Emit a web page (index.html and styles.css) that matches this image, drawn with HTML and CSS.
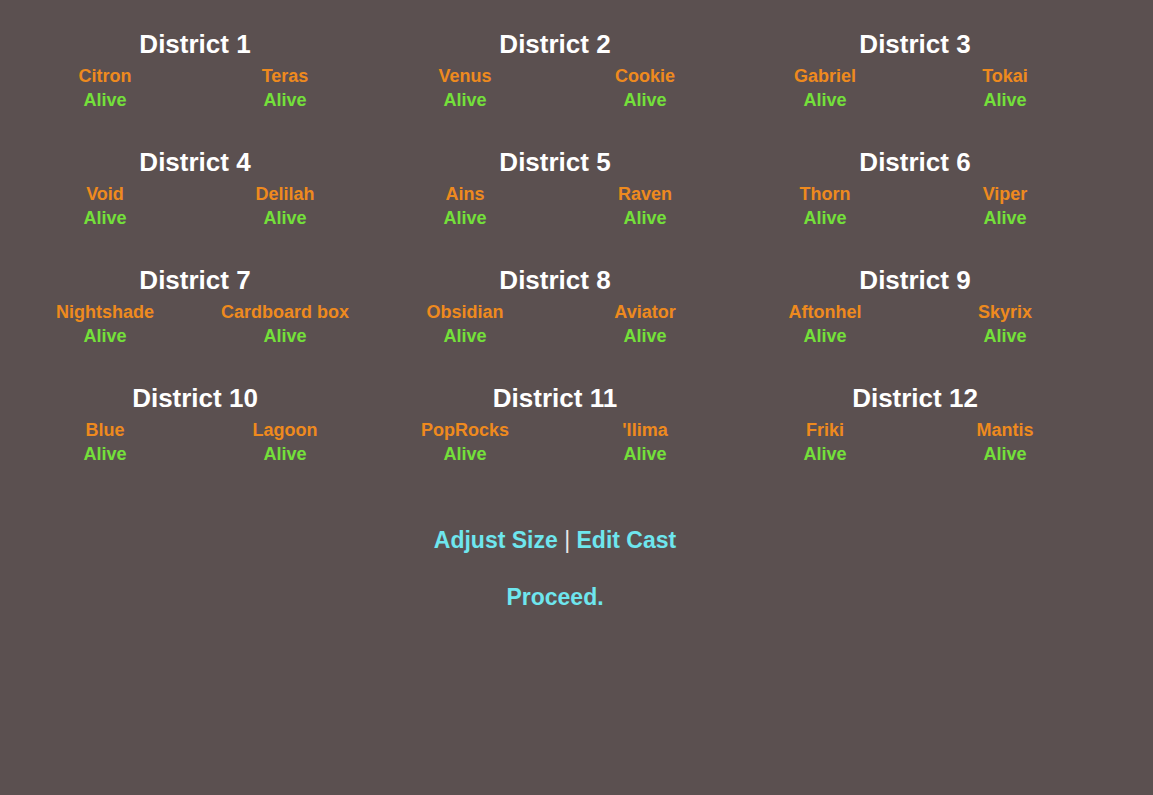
FILE: index.html
```html
<!DOCTYPE html>
<html lang="en">

<head>
    <meta charset="UTF-8">
    <meta name="viewport" content="width=device-width, initial-scale=1.0">
    <title>Districts</title>
    <link rel="stylesheet" href="styles.css">
</head>

<body>
    <div class="wrapper">
        <div class="districts">
            <div class="district">
                <h2>District 1</h2>
                <div class="tributes">
                    <div class="name">Citron</div>
                    <div class="name">Teras</div>
                    <div class="status">Alive</div>
                    <div class="status">Alive</div>
                </div>
            </div>
            <div class="district">
                <h2>District 2</h2>
                <div class="tributes">
                    <div class="name">Venus</div>
                    <div class="name">Cookie</div>
                    <div class="status">Alive</div>
                    <div class="status">Alive</div>
                </div>
            </div>
            <div class="district">
                <h2>District 3</h2>
                <div class="tributes">
                    <div class="name">Gabriel</div>
                    <div class="name">Tokai</div>
                    <div class="status">Alive</div>
                    <div class="status">Alive</div>
                </div>
            </div>
            <div class="district">
                <h2>District 4</h2>
                <div class="tributes">
                    <div class="name">Void</div>
                    <div class="name">Delilah</div>
                    <div class="status">Alive</div>
                    <div class="status">Alive</div>
                </div>
            </div>
            <div class="district">
                <h2>District 5</h2>
                <div class="tributes">
                    <div class="name">Ains</div>
                    <div class="name">Raven</div>
                    <div class="status">Alive</div>
                    <div class="status">Alive</div>
                </div>
            </div>
            <div class="district">
                <h2>District 6</h2>
                <div class="tributes">
                    <div class="name">Thorn</div>
                    <div class="name">Viper</div>
                    <div class="status">Alive</div>
                    <div class="status">Alive</div>
                </div>
            </div>
            <div class="district">
                <h2>District 7</h2>
                <div class="tributes">
                    <div class="name">Nightshade</div>
                    <div class="name">Cardboard box</div>
                    <div class="status">Alive</div>
                    <div class="status">Alive</div>
                </div>
            </div>
            <div class="district">
                <h2>District 8</h2>
                <div class="tributes">
                    <div class="name">Obsidian</div>
                    <div class="name">Aviator</div>
                    <div class="status">Alive</div>
                    <div class="status">Alive</div>
                </div>
            </div>
            <div class="district">
                <h2>District 9</h2>
                <div class="tributes">
                    <div class="name">Aftonhel</div>
                    <div class="name">Skyrix</div>
                    <div class="status">Alive</div>
                    <div class="status">Alive</div>
                </div>
            </div>
            <div class="district">
                <h2>District 10</h2>
                <div class="tributes">
                    <div class="name">Blue</div>
                    <div class="name">Lagoon</div>
                    <div class="status">Alive</div>
                    <div class="status">Alive</div>
                </div>
            </div>
            <div class="district">
                <h2>District 11</h2>
                <div class="tributes">
                    <div class="name">PopRocks</div>
                    <div class="name">'Ilima</div>
                    <div class="status">Alive</div>
                    <div class="status">Alive</div>
                </div>
            </div>
            <div class="district">
                <h2>District 12</h2>
                <div class="tributes">
                    <div class="name">Friki</div>
                    <div class="name">Mantis</div>
                    <div class="status">Alive</div>
                    <div class="status">Alive</div>
                </div>
            </div>
        </div>

        <div class="links">
            <a href="#">Adjust Size</a> <span class="sep">|</span> <a href="#">Edit Cast</a>
        </div>
        <div class="links proceed">
            <a href="#">Proceed.</a>
        </div>
    </div>
</body>

</html>
```

FILE: styles.css
```css
body {
    margin: 0;
    background-color: #5b5050;
    font-family: "Liberation Sans", Arial, sans-serif;
    font-weight: bold;
}

.wrapper {
    width: 1080px;
    padding: 29px 15px 0;
}

.districts {
    display: grid;
    grid-template-columns: repeat(3, 360px);
    row-gap: 35px;
}

.district h2 {
    margin: 0 0 5px;
    color: #ffffff;
    font-size: 26px;
    line-height: 30px;
    text-align: center;
}

.tributes {
    display: grid;
    grid-template-columns: 180px 180px;
    text-align: center;
    font-size: 18px;
    line-height: 24px;
}

.name {
    color: #ee8a1e;
    white-space: nowrap;
}

.status {
    color: #74e03a;
}

.links {
    margin-top: 61px;
    text-align: center;
    font-size: 23px;
    line-height: 27px;
}

.links a {
    color: #6ee6ee;
    text-decoration: none;
}

.sep {
    color: #e8e8e8;
    font-weight: normal;
}

.proceed {
    margin-top: 30px;
}
```
